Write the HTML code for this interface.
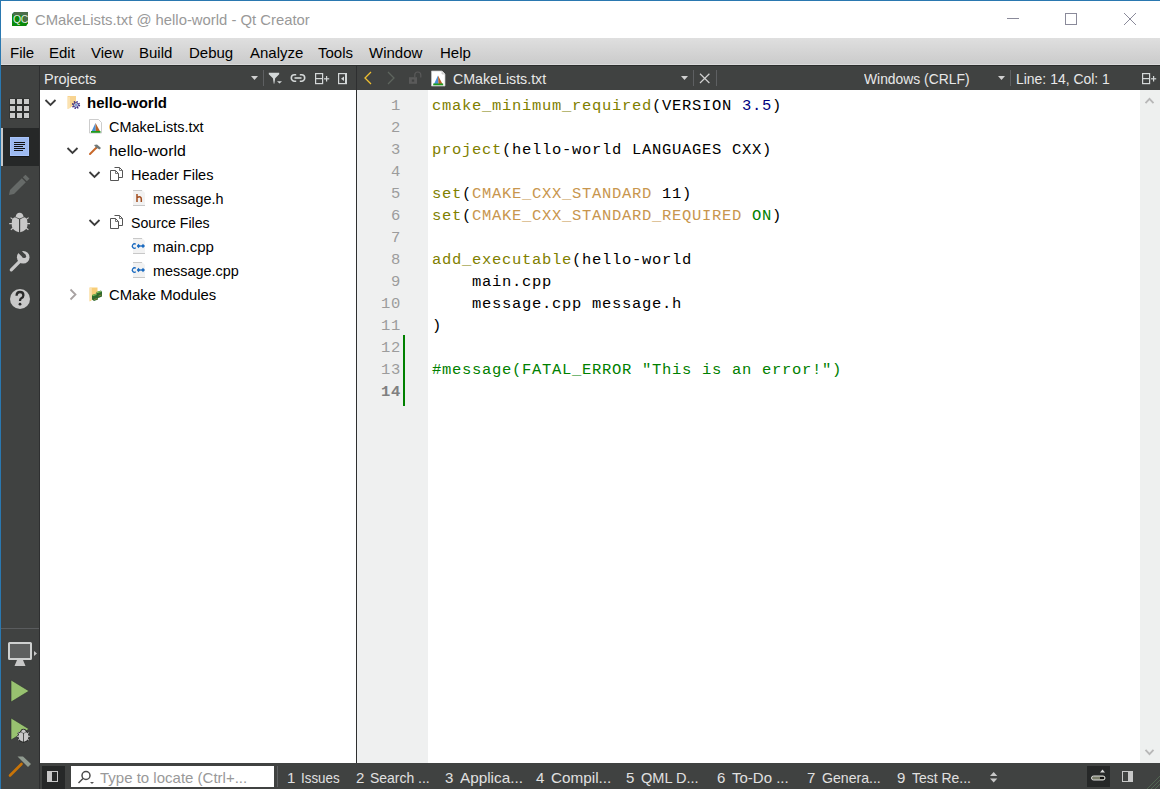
<!DOCTYPE html>
<html><head><meta charset="utf-8">
<style>
*{margin:0;padding:0;box-sizing:border-box}
html,body{width:1160px;height:789px;overflow:hidden;background:#fff;font-family:"Liberation Sans",sans-serif}
.a{position:absolute}
.t{position:absolute;white-space:pre;line-height:1;transform-origin:0 0}
#border-top{left:0;top:0;width:1160px;height:1px;background:#2a78b0}
#border-left{left:0;top:0;width:1px;height:789px;background:#2a78b0}
#title{left:1px;top:1px;width:1159px;height:37px;background:#fff}
#menubar{left:1px;top:38px;width:1159px;height:27px;background:linear-gradient(#dfdfdf,#cbcbcb 96%,#dadada 96%)}
.menu{font-size:15px;color:#000;top:45px}
#sidebar{left:1px;top:65px;width:38px;height:724px;background:#404241}
#sidesep{left:39px;top:65px;width:1px;height:724px;background:#2e2f30}
#projbar{left:40px;top:65px;width:316px;height:25px;background:#404241}
#edbar{left:357px;top:65px;width:803px;height:25px;background:#404241}
#splitter{left:356px;top:65px;width:1px;height:698px;background:#2e2f30}
#tree{left:40px;top:90px;width:316px;height:673px;background:#fff}
#gutter{left:357px;top:90px;width:71px;height:673px;background:#eff0f0}
#code{left:428px;top:90px;width:712px;height:673px;background:#fff}
#vscroll{left:1140px;top:90px;width:20px;height:673px;background:#eef0ef}
#bottombar{left:40px;top:763px;width:1120px;height:26px;background:#404241}
.w{color:#e8e8e8;font-size:15px}
.tree{font-size:15px;color:#000}
.ln{font-family:"Liberation Mono",monospace;font-size:15.5px;letter-spacing:0.7px;color:#9c9c9c;text-align:right;width:40px}
.cd{font-family:"Liberation Mono",monospace;font-size:15.5px;letter-spacing:0.7px;color:#000}
.fn{color:#808000}
.var{color:#c8964e}
.num{color:#000080}
.kw{color:#008000}
.cm{color:#008000}
.tab{font-size:15px;color:#e0e0e0;top:770px}
</style></head><body>
<div class="a" id="title"></div>
<div class="a" id="border-top"></div>
<div class="a" id="border-left"></div>
<!-- QC logo -->
<svg class="a" style="left:12px;top:12px" width="16" height="14" viewBox="0 0 16 14">
<polygon points="1,2 3,0 16,0 16,11 14,14 0,14 0,3" fill="#0a8a0a"/>
<polygon points="3,0 16,0 16,11 14,14 14,3" fill="#3b6e3b" />
<text x="1.5" y="11" font-size="9.5" font-family="Liberation Sans" fill="#e0e8e0">QC</text>
</svg>
<div class="t" style="left:35px;top:12px;font-size:15px;color:#999;transform:scaleX(0.989)">CMakeLists.txt @ hello-world - Qt Creator</div>
<!-- window controls -->
<svg class="a" style="left:1000px;top:8px" width="150" height="24">
<line x1="7" y1="10.5" x2="19" y2="10.5" stroke="#8a8a9a" stroke-width="1"/>
<rect x="65.5" y="5.5" width="11" height="11" fill="none" stroke="#8a8a9a" stroke-width="1"/>
<line x1="124" y1="5" x2="136" y2="17" stroke="#8a8a9a" stroke-width="1"/>
<line x1="136" y1="5" x2="124" y2="17" stroke="#8a8a9a" stroke-width="1"/>
</svg>

<div class="a" id="menubar"></div>
<div class="a" style="left:1px;top:65px;width:1159px;height:1px;background:#2b2d2c;z-index:1"></div>
<div class="t menu" style="left:10px">File</div>
<div class="t menu" style="left:49px">Edit</div>
<div class="t menu" style="left:91px">View</div>
<div class="t menu" style="left:139px">Build</div>
<div class="t menu" style="left:189px">Debug</div>
<div class="t menu" style="left:250px">Analyze</div>
<div class="t menu" style="left:318px">Tools</div>
<div class="t menu" style="left:369px">Window</div>
<div class="t menu" style="left:440px">Help</div>

<div class="a" id="sidebar"></div>
<div class="a" id="sidesep"></div>
<div class="a" id="projbar"></div>
<div class="a" id="edbar"></div>
<div class="a" id="tree"></div>
<div class="a" id="gutter"></div>
<div class="a" id="code"></div>
<div class="a" id="vscroll"></div>
<div class="a" id="splitter"></div>
<div class="a" id="bottombar"></div>

<!-- projects toolbar -->
<div class="t w" style="left:44px;top:71px;transform:scaleX(0.966)">Projects</div>

<!-- editor toolbar -->
<div class="t w" style="left:453px;top:71px;transform:scaleX(0.947)">CMakeLists.txt</div>
<div class="t w" style="left:864px;top:71px;transform:scaleX(0.924)">Windows (CRLF)</div>
<div class="t w" style="left:1016px;top:71px;transform:scaleX(0.93)">Line: 14, Col: 1</div>

<!-- tree -->
<div class="t tree" style="left:87px;top:95px;font-weight:bold">hello-world</div>
<div class="t tree" style="left:109px;top:119px;transform:scaleX(0.962)">CMakeLists.txt</div>
<div class="t tree" style="left:109px;top:143px;transform:scaleX(1.06)">hello-world</div>
<div class="t tree" style="left:131px;top:167px;transform:scaleX(0.97)">Header Files</div>
<div class="t tree" style="left:153px;top:191px;transform:scaleX(0.96)">message.h</div>
<div class="t tree" style="left:131px;top:215px;transform:scaleX(0.943)">Source Files</div>
<div class="t tree" style="left:153px;top:239px">main.cpp</div>
<div class="t tree" style="left:153px;top:263px;transform:scaleX(0.96)">message.cpp</div>
<div class="t tree" style="left:109px;top:287px;transform:scaleX(0.99)">CMake Modules</div>

<!-- code -->
<div class="a" style="left:360px;top:96px">
</div>
<div class="t ln" style="left:361px;top:99px">1</div>
<div class="t ln" style="left:361px;top:121px">2</div>
<div class="t ln" style="left:361px;top:143px">3</div>
<div class="t ln" style="left:361px;top:165px">4</div>
<div class="t ln" style="left:361px;top:187px">5</div>
<div class="t ln" style="left:361px;top:209px">6</div>
<div class="t ln" style="left:361px;top:231px">7</div>
<div class="t ln" style="left:361px;top:253px">8</div>
<div class="t ln" style="left:361px;top:275px">9</div>
<div class="t ln" style="left:361px;top:297px">10</div>
<div class="t ln" style="left:361px;top:319px">11</div>
<div class="t ln" style="left:361px;top:341px">12</div>
<div class="t ln" style="left:361px;top:363px">13</div>
<div class="t ln" style="left:361px;top:385px;font-weight:bold;color:#808080">14</div>
<div class="a" style="left:403px;top:335px;width:2px;height:71px;background:#008000"></div>

<div class="t cd" style="left:432px;top:99px"><span class="fn">cmake_minimum_required</span>(VERSION <span class="num">3.5</span>)</div>
<div class="t cd" style="left:432px;top:143px"><span class="fn">project</span>(hello-world LANGUAGES CXX)</div>
<div class="t cd" style="left:432px;top:187px"><span class="fn">set</span>(<span class="var">CMAKE_CXX_STANDARD</span> 11)</div>
<div class="t cd" style="left:432px;top:209px"><span class="fn">set</span>(<span class="var">CMAKE_CXX_STANDARD_REQUIRED</span> <span class="kw">ON</span>)</div>
<div class="t cd" style="left:432px;top:253px"><span class="fn">add_executable</span>(hello-world</div>
<div class="t cd" style="left:432px;top:275px">    main.cpp</div>
<div class="t cd" style="left:432px;top:297px">    message.cpp message.h</div>
<div class="t cd" style="left:432px;top:319px">)</div>
<div class="t cd cm" style="left:432px;top:363px">#message(FATAL_ERROR "This is an error!")</div>

<!-- bottom bar -->
<div class="a" style="left:71px;top:766px;width:203px;height:21px;background:#fff"></div>
<div class="t" style="left:100px;top:770px;font-size:15px;color:#999">Type to locate (Ctrl+...</div>
<div class="t tab" style="left:287px">1</div><div class="t tab" style="left:301px;transform:scaleX(0.89)">Issues</div>
<div class="t tab" style="left:356px">2</div><div class="t tab" style="left:370px;transform:scaleX(0.93)">Search ...</div>
<div class="t tab" style="left:445px">3</div><div class="t tab" style="left:460px;transform:scaleX(1.02)">Applica...</div>
<div class="t tab" style="left:536px">4</div><div class="t tab" style="left:551px;transform:scaleX(1.02)">Compil...</div>
<div class="t tab" style="left:626px">5</div><div class="t tab" style="left:641px;transform:scaleX(0.97)">QML D...</div>
<div class="t tab" style="left:717px">6</div><div class="t tab" style="left:732px">To-Do ...</div>
<div class="t tab" style="left:807px">7</div><div class="t tab" style="left:822px;transform:scaleX(0.94)">Genera...</div>
<div class="t tab" style="left:897px">9</div><div class="t tab" style="left:912px;transform:scaleX(0.93)">Test Re...</div>


<svg class="a" style="left:0;top:0;pointer-events:none" width="1160" height="789" viewBox="0 0 1160 789">
<!-- ===== sidebar modes ===== -->
<rect x="1" y="128" width="38" height="38" fill="#262828"/>
<rect x="1" y="128" width="2" height="38" fill="#c8c8c8"/>
<!-- welcome grid -->
<rect x="9.5" y="98.5" width="20" height="20.3" fill="#1e1f1e" opacity="0.6"/>
<g fill="#c8c9c8">
<rect x="10" y="99" width="5" height="5"/><rect x="17" y="99" width="5" height="5"/><rect x="24" y="99" width="5" height="5"/>
<rect x="10" y="106" width="5" height="5"/><rect x="17" y="106" width="5" height="5"/><rect x="24" y="106" width="5" height="5"/>
<rect x="10" y="113" width="5" height="5"/><rect x="17" y="113" width="5" height="5"/><rect x="24" y="113" width="5" height="5"/>
</g>
<!-- edit -->
<rect x="10" y="137" width="19" height="20" fill="#141414"/><rect x="10" y="137" width="19" height="19" fill="#a8c4fb"/><rect x="11" y="138" width="17" height="17" fill="#9dbaf0"/>
<g fill="#111">
<rect x="14" y="142" width="11" height="1"/><rect x="14" y="144" width="11" height="1"/><rect x="14" y="146" width="9" height="1"/><rect x="14" y="148" width="11" height="1"/><rect x="14" y="150" width="9" height="1"/>
</g>
<!-- design pencil (disabled) -->
<g fill="#666a68">
<polygon points="9,195 10,190 21.8,178.2 25.8,182.2 14,194"/>
<polygon points="22.8,177.2 25.5,174.8 29.5,178.8 26.8,181.2"/>
</g>
<!-- debug bug -->
<g fill="#c8c8c8">
<path d="M15.6,217 Q16.4,212.8 19.6,212.8 Q22.8,212.8 23.6,217 L19.6,218.4 Z"/>
<path d="M19,219.2 L15,217.2 Q12,218 11.8,222 L11.8,226 Q12.4,230.6 19,232.3 Z"/>
<path d="M20.2,219.2 L24.2,217.2 Q27.2,218 27.4,222 L27.4,226 Q26.8,230.6 20.2,232.3 Z"/>
</g>
<path d="M9.2,223.6 L12.5,223.6 M30,223.6 L26.7,223.6 M10.6,217.6 L13.2,219.6 M28.6,217.6 L26,219.6 M10.8,229.8 L13.2,228 M28.4,229.8 L26,228" stroke="#c8c8c8" stroke-width="1.1" fill="none"/>
<!-- projects wrench -->
<path d="M11.3,269.8 L19.5,261.6" stroke="#c8c8c8" stroke-width="3.3" stroke-linecap="round"/>
<circle cx="23.2" cy="257.2" r="6.3" fill="#c8c8c8"/>
<g transform="rotate(-45 24.2 256.2)"><rect x="22.3" y="248" width="3.8" height="8.2" fill="#404241"/></g>
<circle cx="24.2" cy="256.2" r="1.9" fill="#404241"/>
<!-- help -->
<circle cx="20" cy="299" r="10" fill="#c8c8c8"/>
<path d="M16.6,295.8 Q16.6,292 20,292 Q23.4,292 23.4,295.2 Q23.4,297.2 21.3,298.3 Q20,299 20,301" fill="none" stroke="#2a2a2a" stroke-width="2.3"/><circle cx="20" cy="304.2" r="1.4" fill="#2a2a2a"/>
<!-- separator -->
<rect x="1" y="628" width="38" height="1" fill="#5a5c5e"/>
<!-- monitor -->
<rect x="9" y="643" width="22" height="16" rx="0.6" fill="#5e605f" stroke="#cfd1d0" stroke-width="2"/>
<polygon points="17,660 23,660 25.5,666 14.5,666" fill="#c8c8c8"/>
<polygon points="34,651 37,653.5 34,656" fill="#c8c8c8"/>
<!-- run -->
<polygon points="11,680 29,691 11,702" fill="#98c270" stroke="#2e302f" stroke-width="0.6"/>
<!-- debug run -->
<polygon points="11,718 29,729 11,740" fill="#98c270" stroke="#2e302f" stroke-width="0.6"/>
<g transform="translate(23.5,735.6) scale(0.62) translate(-19.6,-222.5)">
<g fill="#2a2c2b" stroke="#2a2c2b" stroke-width="3"><path d="M15.6,217 Q16.4,212.8 19.6,212.8 Q22.8,212.8 23.6,217 L19.6,218.4 Z"/>
<path d="M19,219.2 L15,217.2 Q12,218 11.8,222 L11.8,226 Q12.4,230.6 19,232.3 Z"/>
<path d="M20.2,219.2 L24.2,217.2 Q27.2,218 27.4,222 L27.4,226 Q26.8,230.6 20.2,232.3 Z"/></g>
<path d="M9.2,223.6 L12.5,223.6 M30,223.6 L26.7,223.6 M10.6,217.6 L13.2,219.6 M28.6,217.6 L26,219.6 M10.8,229.8 L13.2,228 M28.4,229.8 L26,228" stroke="#2a2c2b" stroke-width="3.4" fill="none"/>
<g fill="#c8c8c8"><path d="M15.6,217 Q16.4,212.8 19.6,212.8 Q22.8,212.8 23.6,217 L19.6,218.4 Z"/>
<path d="M19,219.2 L15,217.2 Q12,218 11.8,222 L11.8,226 Q12.4,230.6 19,232.3 Z"/>
<path d="M20.2,219.2 L24.2,217.2 Q27.2,218 27.4,222 L27.4,226 Q26.8,230.6 20.2,232.3 Z"/></g>
<path d="M9.2,223.6 L12.5,223.6 M30,223.6 L26.7,223.6 M10.6,217.6 L13.2,219.6 M28.6,217.6 L26,219.6 M10.8,229.8 L13.2,228 M28.4,229.8 L26,228" stroke="#c8c8c8" stroke-width="1.6" fill="none"/>
</g>
<!-- build hammer -->
<path d="M10,775.5 L21.5,764" stroke="#c87408" stroke-width="2.6" stroke-linecap="round"/>
<polygon points="17.5,756.5 23,756.5 31,764 28,767" fill="#8f9a8f"/>

<!-- ===== projects toolbar ===== -->
<polygon points="251,76 258,76 254.5,80" fill="#d0d0d0"/>
<rect x="263" y="70" width="1" height="16" fill="#5e6062"/>
<polygon points="268.8,72.8 279.2,72.8 279.2,74.2 275.2,78.3 274.3,83.7 273.8,83.7 272.9,78.3 268.8,74.2" fill="#d4d8d8"/>
<polygon points="277,81.2 282,81.2 279.5,83.5" fill="#d4d8d8"/>
<g fill="none" stroke="#d4d8d8" stroke-width="1.6">
<path d="M296.2,74.8 L294.5,74.8 A3.2,3.2 0 0 0 294.5,81.2 L296.2,81.2"/>
<path d="M299.8,74.8 L301.5,74.8 A3.2,3.2 0 0 1 301.5,81.2 L299.8,81.2"/>
</g>
<rect x="294.5" y="77.2" width="7" height="1.6" fill="#d4d8d8"/>
<g fill="none" stroke="#d4d8d8" stroke-width="1.2">
<rect x="315.6" y="73.6" width="7" height="10"/>
<line x1="315.6" y1="78.6" x2="322.6" y2="78.6"/>
<line x1="324" y1="78.8" x2="329.2" y2="78.8"/>
<line x1="326.6" y1="76" x2="326.6" y2="81.6"/>
<rect x="338.6" y="73.6" width="7.8" height="10"/>
</g>
<rect x="345" y="73" width="2" height="11" fill="#d4d8d8"/>
<polygon points="344,76.5 344,81 341,78.8" fill="#d4d8d8"/>

<!-- ===== editor toolbar ===== -->
<path d="M371,72 L365,78 L371,84" fill="none" stroke="#f0c030" stroke-width="1.3"/>
<path d="M388,72 L394,78 L388,84" fill="none" stroke="#5e655e" stroke-width="1.3"/>
<rect x="409" y="77.2" width="8" height="6.6" fill="#5a5a5a"/>
<rect x="411.8" y="79.5" width="2.4" height="2.2" fill="#404241"/>
<path d="M414.8,77.2 L414.8,75 A3,3 0 0 1 420.8,75 L420.8,77.5" fill="none" stroke="#5a5a5a" stroke-width="1.2"/>
<!-- cmake doc icon (toolbar) -->
<g>
<path d="M431.5,71 L442,71 L445,74 L445,86 L431.5,86 Z" fill="#fff" stroke="#c8c8c8" stroke-width="0.7"/>
<path d="M442,71 L442,74 L445,74" fill="#e8e8e8" stroke="#aaa" stroke-width="0.5"/>
<polygon points="438,75.5 434,84 438.5,84" fill="#4a90d8"/>
<polygon points="438,75.5 442.5,84 438.5,84" fill="#b8642a"/>
<rect x="433.2" y="83.5" width="10" height="1.8" fill="#1e9a1e"/>
</g>
<polygon points="681,76 688,76 684.5,80" fill="#d0d0d0"/>
<rect x="693" y="70" width="1" height="16" fill="#5e6062"/>
<path d="M700,73.8 L709.4,83 M709.4,73.8 L700,83" stroke="#d0d0d0" stroke-width="1.2"/>
<rect x="716" y="70" width="1" height="16" fill="#5e6062"/>
<polygon points="998,76 1005,76 1001.5,80" fill="#d0d0d0"/>
<rect x="1010" y="70" width="1" height="16" fill="#5e6062"/>
<g fill="none" stroke="#d4d8d8" stroke-width="1.2">
<rect x="1142.6" y="73.6" width="7" height="10"/>
<line x1="1142.6" y1="78.6" x2="1149.6" y2="78.6"/>
<line x1="1151" y1="78.8" x2="1156.2" y2="78.8"/>
<line x1="1153.6" y1="76" x2="1153.6" y2="81.6"/>
</g>

<!-- ===== tree icons ===== -->
<g fill="none" stroke="#3c3c3c" stroke-width="1.8">
<path d="M45.5,100 L50.5,105 L55.5,100"/>
<path d="M67.5,148 L72.5,153 L77.5,148"/>
<path d="M89.5,172 L94.5,177 L99.5,172"/>
<path d="M89.5,220 L94.5,225 L99.5,220"/>
</g>
<path d="M70.5,289.5 L75.5,294.5 L70.5,299.5" fill="none" stroke="#a8a2a2" stroke-width="1.8"/>
<!-- project folder w/ gear -->
<path d="M67.5,96 L76,96 L76,103 L70,108 L67.5,109 Z" fill="#f7cf85" opacity="0.9"/>
<rect x="68" y="97" width="2" height="11" fill="#fbe2b0"/>
<circle cx="76" cy="105" r="3.3" fill="none" stroke="#3a2a80" stroke-width="1.6" stroke-dasharray="1.3,1.3"/>
<circle cx="76" cy="105" r="2.3" fill="none" stroke="#3a2a80" stroke-width="1"/>
<circle cx="76" cy="105" r="1.2" fill="#7aa0d8"/>
<!-- CMakeLists doc -->
<path d="M89.5,119.5 L98.5,119.5 L101.5,122.5 L101.5,133 L89.5,133 Z" fill="#fff" stroke="#c0c0c0" stroke-width="0.8"/>
<polygon points="95.5,123 91.5,131.5 95.8,131.5" fill="#4a90d8"/>
<polygon points="95.5,123 100.2,131.5 95.8,131.5" fill="#b8642a"/>
<rect x="91" y="131" width="9.5" height="1.8" fill="#1e9a1e"/>
<!-- hammer -->
<path d="M90,154 L96.5,147.5" stroke="#c8682a" stroke-width="2" stroke-linecap="round"/>
<polygon points="94,145 97,144.5 101,148 99.5,149.5 96,147.5" fill="#707878"/>
<!-- Header/Source Files icons -->
<g fill="#fff" stroke="#555" stroke-width="1" stroke-linejoin="miter">
<path d="M114.5,167.5 L119.5,167.5 L122.5,170.5 L122.5,177.5 L118.5,177.5"/>
<path d="M110.5,170.5 L115.5,170.5 L118.5,173.5 L118.5,180.5 L110.5,180.5 Z"/>
<path d="M115.5,170.5 L115.5,173.5 L118.5,173.5" fill="none" stroke-width="0.8"/>
<path d="M119.5,167.5 L119.5,170.5 L122.5,170.5" fill="none" stroke-width="0.8"/>
<path d="M114.5,215.5 L119.5,215.5 L122.5,218.5 L122.5,225.5 L118.5,225.5"/>
<path d="M110.5,218.5 L115.5,218.5 L118.5,221.5 L118.5,228.5 L110.5,228.5 Z"/>
<path d="M115.5,218.5 L115.5,221.5 L118.5,221.5" fill="none" stroke-width="0.8"/>
<path d="M119.5,215.5 L119.5,218.5 L122.5,218.5" fill="none" stroke-width="0.8"/>
</g>
<!-- file docs h/cpp -->
<g fill="#f2f2f2">
<path d="M133,190 L142,190 L145,193 L145,206 L133,206 Z"/>
<path d="M133,238 L142,238 L145,241 L145,254 L133,254 Z"/>
<path d="M133,262 L142,262 L145,265 L145,278 L133,278 Z"/>
</g>
<g fill="#c8c8c8">
<rect x="133" y="190" width="9" height="1"/><rect x="133" y="205" width="12" height="1"/>
<rect x="133" y="238" width="9" height="1"/><rect x="133" y="253" width="12" height="1"/>
<rect x="133" y="262" width="9" height="1"/><rect x="133" y="277" width="12" height="1"/>
</g>
<path d="M137,194 L137,202 M137,197.6 Q141.3,195.6 141.3,199 L141.3,202" fill="none" stroke="#a24c1e" stroke-width="1.5"/>
<g fill="none" stroke="#1a6ac0" stroke-width="1.3">
<path d="M135.8,244.3 A2.2,2.2 0 1 0 135.8,247.8"/>
<path d="M137.5,246 L144.5,246"/>
<path d="M135.8,268.3 A2.2,2.2 0 1 0 135.8,271.8"/>
<path d="M137.5,270 L144.5,270"/>
</g>
<g fill="#1a6ac0">
<polygon points="138.5,243.8 140.2,246 138.5,248.2 136.8,246"/><polygon points="143,243.8 144.7,246 143,248.2 141.3,246"/>
<polygon points="138.5,267.8 140.2,270 138.5,272.2 136.8,270"/><polygon points="143,267.8 144.7,270 143,272.2 141.3,270"/>
</g>
<!-- cmake modules folder -->
<path d="M89.5,287.5 L97.5,287.5 L97.5,293 L92,300 L89.5,301.5 Z" fill="#f7c96a" opacity="0.9"/>
<rect x="90" y="288" width="1.8" height="12" fill="#fbe2b0"/>
<g>
<polygon points="92,295 96.5,293.5 98,295 98,299.5 94,301 92,299.5" fill="#2e6a2e"/>
<polygon points="96.5,292 101,290.5 102,292 102,296.5 98.5,298 96.5,296.5" fill="#2e6a2e"/>
<path d="M92.5,295.5 L96.5,294.5 M97,292.5 L101,291.5" stroke="#8ed060" stroke-width="1.2"/>
<path d="M94,299.5 L97.5,298.5 M98.5,296 L101.5,295" stroke="#a08040" stroke-width="0.8"/>
</g>

<!-- ===== title logo ===== -->
<polygon points="14,12 28,12 28,23.2 25.2,26 12,26 12,14" fill="#0a8a0a"/>
<polygon points="14,12 28,12 28,22.2 23.3,22.2 23.3,15.5 12.5,15.5 12.5,13.5" fill="#4b6e49"/>
<path d="M12.2,13.8 L13.8,12.2" stroke="#9cc8e0" stroke-width="0.8"/>
<text x="13.1" y="23.3" font-family="Liberation Sans" font-size="10.5" fill="#dfe6df" letter-spacing="-0.6">QC</text>
<!-- ===== bottom bar ===== -->
<rect x="42" y="766" width="23" height="23" fill="#262828"/>
<rect x="47" y="771" width="11" height="11" fill="#c8c8c8"/>
<rect x="52" y="772" width="5" height="9" fill="#262828"/>
<g fill="none" stroke="#4a4a4a" stroke-width="1.5">
<circle cx="86" cy="775.5" r="4"/>
<path d="M83,778.5 L78.5,783"/>
</g>
<polygon points="90,782 94,782 92,784" fill="#555"/>
<rect x="277" y="766" width="1" height="21" fill="#5e6062"/>
<path d="M990,776 L993.7,772 L997.3,776 Z M990,778.5 L993.7,782.5 L997.3,778.5 Z" fill="#c8c8c8"/>
<rect x="1087" y="766" width="23" height="21" fill="#262828"/>
<polygon points="1100,772.5 1102.5,769.5 1105,772.5" fill="#d8d8d8"/>
<rect x="1091.5" y="776" width="13.5" height="4" rx="2" fill="#7a7d6a" stroke="#d8d8d8" stroke-width="1"/>
<rect x="1100" y="777" width="4" height="2" fill="#111"/>
<rect x="1122" y="771" width="11" height="11" fill="#c8c8c8"/>
<rect x="1123" y="772" width="5" height="9" fill="#404241"/>
<g stroke="#5d7a5d" stroke-width="0.8" opacity="0.8">
<path d="M1147,789 L1160,776 M1151,789 L1160,780 M1155,789 L1160,784"/>
</g>
<!-- scrollbar arrows -->
<path d="M1145.5,103.2 L1149.5,98.8 L1153.5,103.2" fill="none" stroke="#b8b8b8" stroke-width="1.8"/>
<path d="M1145.5,749.8 L1149.5,754.2 L1153.5,749.8" fill="none" stroke="#b8b8b8" stroke-width="1.8"/>
</svg>

</body></html>
